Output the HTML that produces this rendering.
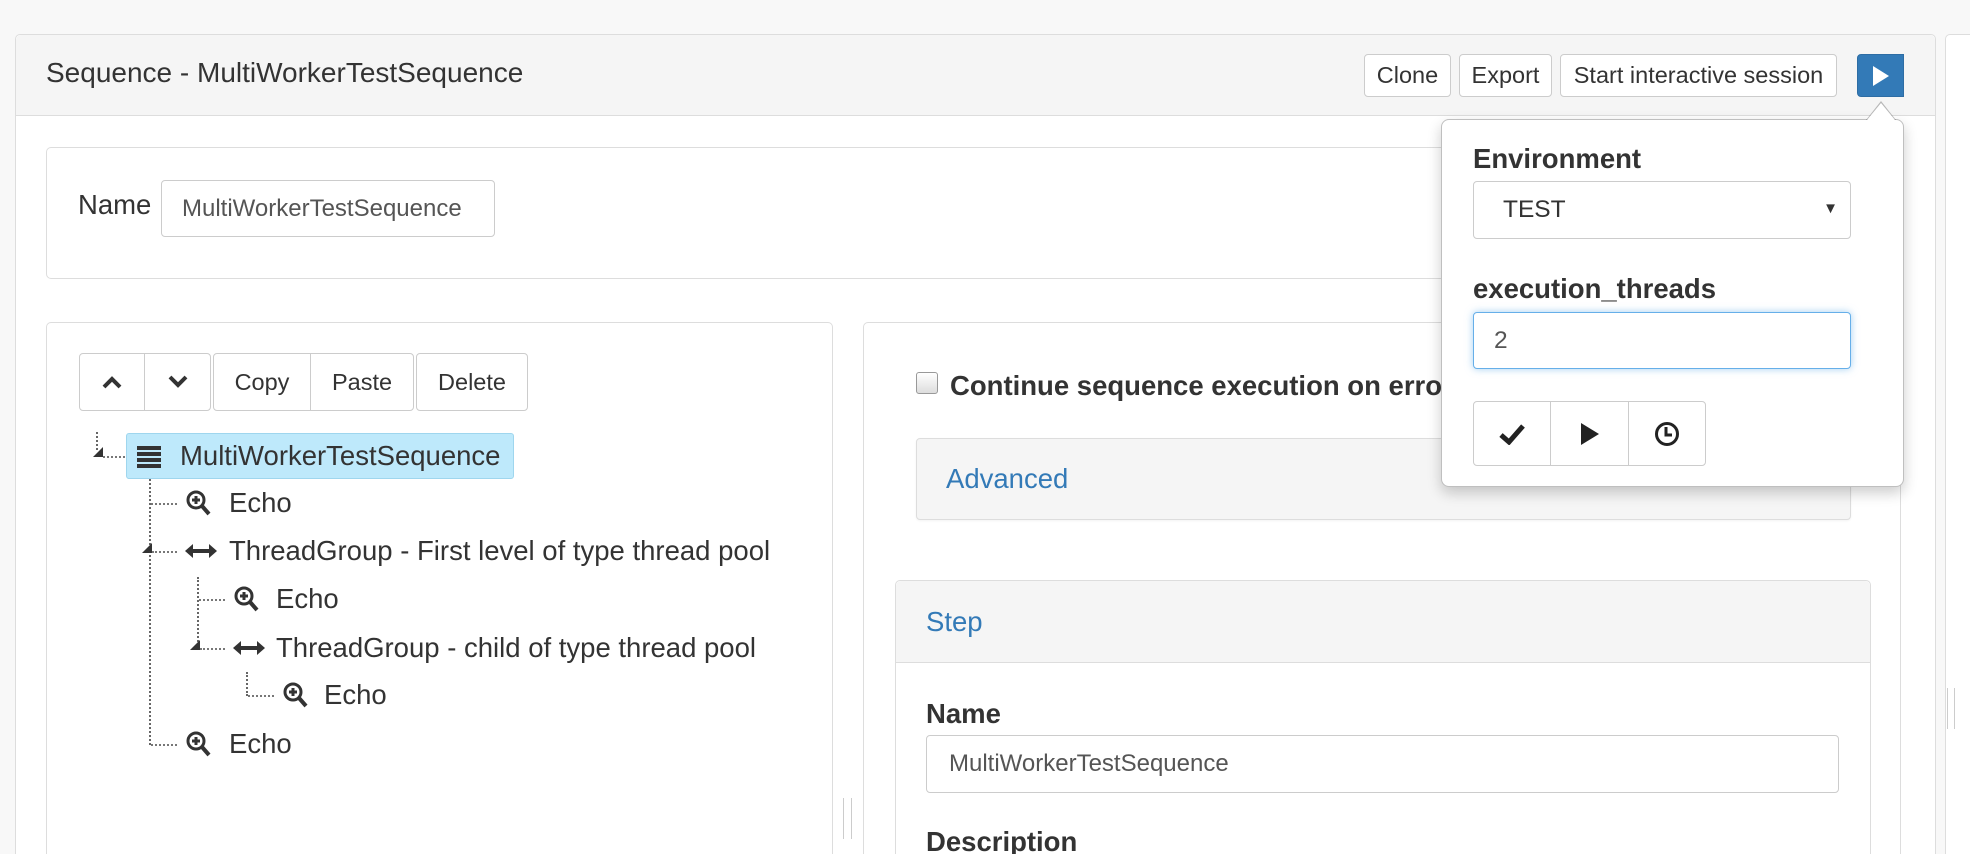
<!DOCTYPE html>
<html><head><meta charset="utf-8">
<style>
*{box-sizing:border-box;margin:0;padding:0}
html{width:1970px;height:854px;overflow:hidden}
body{width:1970px;height:854px;overflow:hidden;background:#f8f8f8;font-family:"Liberation Sans",Arial,sans-serif;color:#333;position:relative}
.a{position:absolute}
.btn{position:absolute;background:#fff;border:1px solid #ccc;border-radius:4px;font-size:23.5px;display:flex;align-items:center;justify-content:center;color:#333}
.lbl{position:absolute;font-weight:bold;font-size:27.5px;line-height:32px;color:#333}
.inp{position:absolute;background:#fff;border:1px solid #ccc;border-radius:4px;font-size:24px;display:flex;align-items:center;padding-left:20px;color:#555}
.t{position:absolute;font-size:27.5px;line-height:32px;color:#333;white-space:nowrap}
.dv{position:absolute;border-left:2px dotted #666}
.dh{position:absolute;border-top:2px dotted #777}
.tri{position:absolute;width:0;height:0;border-left:10px solid transparent;border-bottom:10px solid #333}
</style></head><body>
<!-- main panel -->
<div class="a" style="left:15px;top:34px;width:1921px;height:830px;background:#fff;border:1px solid #ddd;border-radius:5px"></div>
<div class="a" style="left:16px;top:35px;width:1919px;height:81px;background:#f5f5f5;border-bottom:1px solid #ddd;border-radius:5px 5px 0 0"></div>
<div class="a" style="left:46px;top:57px;font-size:28px;line-height:32px;color:#333">Sequence - MultiWorkerTestSequence</div>
<div class="btn" style="left:1364px;top:54px;width:87px;height:43px">Clone</div>
<div class="btn" style="left:1459px;top:54px;width:93px;height:43px">Export</div>
<div class="btn" style="left:1560px;top:54px;width:277px;height:43px">Start interactive session</div>
<div class="btn" style="left:1857px;top:54px;width:47px;height:43px;background:#337ab7;border-color:#2e6da4;border-radius:4px 0 0 4px"><svg width="18" height="20" viewBox="0 0 18 20"><path d="M1 0L17 10L1 20Z" fill="#fff"/></svg></div>
<!-- right edge panel -->
<div class="a" style="left:1945px;top:34px;width:30px;height:830px;background:#fff;border:1px solid #ddd;border-radius:5px"></div>
<div class="a" style="left:1947px;top:688px;width:8px;height:41px;border-left:1px solid #ccc;border-right:1px solid #ccc"></div>

<!-- name panel -->
<div class="a" style="left:46px;top:147px;width:1855px;height:132px;border:1px solid #ddd;border-radius:5px;background:#fff"></div>
<div class="a" style="left:78px;top:189px;font-size:27.5px;line-height:32px">Name</div>
<div class="inp" style="left:161px;top:180px;width:334px;height:57px;color:#555">MultiWorkerTestSequence</div>

<!-- left panel -->
<div class="a" style="left:46px;top:322px;width:787px;height:560px;border:1px solid #ddd;border-radius:5px;background:#fff"></div>
<div class="btn" style="left:79px;top:353px;width:66px;height:58px;border-radius:4px 0 0 4px"><svg width="20" height="14" viewBox="0 0 20 14"><path d="M2 12L10 4L18 12" stroke="#333" stroke-width="4" fill="none"/></svg></div>
<div class="btn" style="left:144px;top:353px;width:67px;height:58px;border-radius:0 4px 4px 0"><svg width="20" height="14" viewBox="0 0 20 14"><path d="M2 2L10 10L18 2" stroke="#333" stroke-width="4" fill="none"/></svg></div>
<div class="btn" style="left:213px;top:353px;width:98px;height:58px;border-radius:4px 0 0 4px">Copy</div>
<div class="btn" style="left:310px;top:353px;width:104px;height:58px;border-radius:0 4px 4px 0">Paste</div>
<div class="btn" style="left:416px;top:353px;width:112px;height:58px">Delete</div>

<!-- tree -->
<div class="dv" style="left:96px;top:432px;height:18px"></div>
<div class="tri" style="left:93px;top:447px"></div>
<div class="dh" style="left:103px;top:456px;width:22px"></div>
<div class="a" style="left:126px;top:433px;width:388px;height:46px;background:#bee9fb;border:1px solid #9fd6ee;border-radius:3px"></div>
<svg class="a" style="left:137px;top:445px" width="24" height="24" viewBox="0 0 24 24"><rect x="0" y="1" width="24" height="4" fill="#333"/><rect x="0" y="7" width="24" height="4" fill="#333"/><rect x="0" y="13" width="24" height="4" fill="#333"/><rect x="0" y="19" width="24" height="4" fill="#333"/></svg>
<div class="t" style="left:180px;top:440px">MultiWorkerTestSequence</div>

<div class="dv" style="left:149px;top:479px;height:266px"></div>
<div class="dh" style="left:151px;top:503px;width:26px"></div>
<svg class="a" style="left:186px;top:490px" width="26" height="26" viewBox="0 0 26 26"><circle cx="10" cy="10" r="8" stroke="#333" stroke-width="3" fill="none"/><path d="M16 16L23 24" stroke="#333" stroke-width="4"/><path d="M10 6V14M6 10H14" stroke="#333" stroke-width="3"/></svg>
<div class="t" style="left:229px;top:487px">Echo</div>
<div class="tri" style="left:142px;top:543px"></div>
<div class="dh" style="left:152px;top:551px;width:25px"></div>
<svg class="a" style="left:185px;top:543px" width="32" height="16" viewBox="0 0 32 16"><path d="M0 8L8 1V15Z M32 8L24 1V15Z" fill="#333"/><rect x="6" y="6" width="20" height="4" fill="#333"/></svg>
<div class="t" style="left:229px;top:535px">ThreadGroup - First level of type thread pool</div>
<div class="dv" style="left:197px;top:577px;height:72px"></div>
<div class="dh" style="left:199px;top:599px;width:26px"></div>
<svg class="a" style="left:234px;top:586px" width="26" height="26" viewBox="0 0 26 26"><circle cx="10" cy="10" r="8" stroke="#333" stroke-width="3" fill="none"/><path d="M16 16L23 24" stroke="#333" stroke-width="4"/><path d="M10 6V14M6 10H14" stroke="#333" stroke-width="3"/></svg>
<div class="t" style="left:276px;top:583px">Echo</div>
<div class="tri" style="left:190px;top:640px"></div>
<div class="dh" style="left:200px;top:648px;width:25px"></div>
<svg class="a" style="left:233px;top:640px" width="32" height="16" viewBox="0 0 32 16"><path d="M0 8L8 1V15Z M32 8L24 1V15Z" fill="#333"/><rect x="6" y="6" width="20" height="4" fill="#333"/></svg>
<div class="t" style="left:276px;top:632px">ThreadGroup - child of type thread pool</div>
<div class="dv" style="left:246px;top:672px;height:24px"></div>
<div class="dh" style="left:248px;top:695px;width:26px"></div>
<svg class="a" style="left:283px;top:682px" width="26" height="26" viewBox="0 0 26 26"><circle cx="10" cy="10" r="8" stroke="#333" stroke-width="3" fill="none"/><path d="M16 16L23 24" stroke="#333" stroke-width="4"/><path d="M10 6V14M6 10H14" stroke="#333" stroke-width="3"/></svg>
<div class="t" style="left:324px;top:679px">Echo</div>
<div class="dh" style="left:151px;top:744px;width:26px"></div>
<svg class="a" style="left:186px;top:731px" width="26" height="26" viewBox="0 0 26 26"><circle cx="10" cy="10" r="8" stroke="#333" stroke-width="3" fill="none"/><path d="M16 16L23 24" stroke="#333" stroke-width="4"/><path d="M10 6V14M6 10H14" stroke="#333" stroke-width="3"/></svg>
<div class="t" style="left:229px;top:728px">Echo</div>

<div class="a" style="left:843px;top:798px;width:9px;height:41px;border-left:1px solid #ccc;border-right:1px solid #ccc"></div>

<!-- right panel -->
<div class="a" style="left:863px;top:322px;width:1038px;height:560px;border:1px solid #ddd;border-radius:5px;background:#fff"></div>
<div class="a" style="left:916px;top:372px;width:22px;height:22px;border:1px solid #999;border-radius:3px;background:linear-gradient(#fff,#ddd)"></div>
<div class="a" style="left:950px;top:370px;font-size:27.5px;line-height:32px;font-weight:bold;white-space:nowrap">Continue sequence execution on error</div>
<div class="a" style="left:916px;top:438px;width:935px;height:82px;background:#f5f5f5;border:1px solid #ddd;border-radius:4px;box-shadow:0 1px 2px rgba(0,0,0,.05)"></div>
<div class="a" style="left:946px;top:463px;font-size:27.5px;line-height:32px;color:#337ab7">Advanced</div>
<div class="a" style="left:895px;top:580px;width:976px;height:300px;border:1px solid #ddd;border-radius:5px;background:#fff"></div>
<div class="a" style="left:896px;top:581px;width:974px;height:82px;background:#f5f5f5;border-bottom:1px solid #ddd;border-radius:5px 5px 0 0"></div>
<div class="a" style="left:926px;top:606px;font-size:27.5px;line-height:32px;color:#337ab7">Step</div>
<div class="lbl" style="left:926px;top:698px">Name</div>
<div class="inp" style="left:926px;top:735px;width:913px;height:58px;padding-left:22px">MultiWorkerTestSequence</div>
<div class="lbl" style="left:926px;top:826px">Description</div>

<!-- popover -->
<div class="a" style="left:1441px;top:119px;width:463px;height:368px;background:#fff;border:1px solid rgba(0,0,0,.25);border-radius:8px;box-shadow:0 6px 14px rgba(0,0,0,.2)"></div>
<div class="a" style="left:1866px;top:101px;width:0;height:0;border-left:15px solid transparent;border-right:15px solid transparent;border-bottom:19px solid rgba(0,0,0,.25)"></div>
<div class="a" style="left:1867px;top:103px;width:0;height:0;border-left:14px solid transparent;border-right:14px solid transparent;border-bottom:17px solid #fff"></div>
<div class="lbl" style="left:1473px;top:143px">Environment</div>
<div class="inp" style="left:1473px;top:181px;width:378px;height:58px;padding-left:29px;color:#333;font-size:24.5px">TEST<span style="position:absolute;right:12px;top:18px;font-size:15px">▼</span></div>
<div class="lbl" style="left:1473px;top:273px">execution_threads</div>
<div class="inp" style="left:1473px;top:312px;width:378px;height:57px;border-color:#66afe9;box-shadow:0 0 8px rgba(102,175,233,.6);color:#555;font-size:24.5px">2</div>
<div class="btn" style="left:1473px;top:401px;width:78px;height:65px;border-radius:4px 0 0 4px"><svg width="26" height="22" viewBox="0 0 26 22"><path d="M2 12L10 19L24 3" stroke="#222" stroke-width="5" fill="none"/></svg></div>
<div class="btn" style="left:1550px;top:401px;width:79px;height:65px;border-radius:0"><svg width="20" height="24" viewBox="0 0 20 24"><path d="M1 1L19 12L1 23Z" fill="#222"/></svg></div>
<div class="btn" style="left:1628px;top:401px;width:78px;height:65px;border-radius:0 4px 4px 0"><svg width="26" height="26" viewBox="0 0 26 26"><circle cx="13" cy="13" r="10.5" stroke="#222" stroke-width="3" fill="none"/><path d="M12 6V14H18" stroke="#222" stroke-width="3" fill="none"/></svg></div>
</body></html>
